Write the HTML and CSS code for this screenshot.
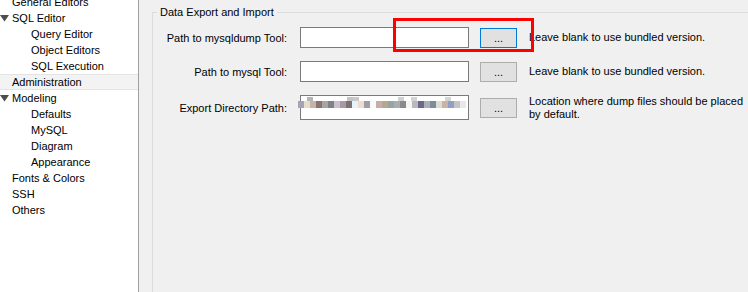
FILE: index.html
```html
<!DOCTYPE html>
<html>
<head>
    <title>Preferences - Administration</title>
    <link rel="stylesheet" href="styles.css">
</head>
<body>
    <div class="window">
        <div class="tree">
            <div class="tree-list">
                <div class="node"><span class="twisty"></span>General Editors</div>
                <div class="node"><span class="twisty"><svg width="9" height="7" viewBox="0 0 9 7"><polygon points="0,0 9,0 4.5,6.5" fill="#4d4d4d"/></svg></span>SQL Editor</div>
                <div class="node child"><span class="twisty"></span>Query Editor</div>
                <div class="node child"><span class="twisty"></span>Object Editors</div>
                <div class="node child"><span class="twisty"></span>SQL Execution</div>
                <div class="node selected"><span class="twisty"></span>Administration</div>
                <div class="node"><span class="twisty"><svg width="9" height="7" viewBox="0 0 9 7"><polygon points="0,0 9,0 4.5,6.5" fill="#4d4d4d"/></svg></span>Modeling</div>
                <div class="node child"><span class="twisty"></span>Defaults</div>
                <div class="node child"><span class="twisty"></span>MySQL</div>
                <div class="node child"><span class="twisty"></span>Diagram</div>
                <div class="node child"><span class="twisty"></span>Appearance</div>
                <div class="node"><span class="twisty"></span>Fonts &amp; Colors</div>
                <div class="node"><span class="twisty"></span>SSH</div>
                <div class="node"><span class="twisty"></span>Others</div>
            </div>
        </div>

        <div class="page">
            <div class="group">
                <div class="group-title">Data Export and Import</div>
                <div class="form">
                    <div class="form-label">Path to mysqldump Tool:</div>
                    <div class="field"></div>
                    <div class="browse focused">...</div>
                    <div class="hint">Leave blank to use bundled version.</div>

                    <div class="form-label">Path to mysql Tool:</div>
                    <div class="field"></div>
                    <div class="browse">...</div>
                    <div class="hint">Leave blank to use bundled version.</div>

                    <div class="form-label">Export Directory Path:</div>
                    <div class="field tall"><div class="mosaic"></div></div>
                    <div class="browse">...</div>
                    <div class="hint">Location where dump files should be placed<br>by default.</div>
                </div>
            </div>
        </div>
    </div>

    <!-- annotation drawn over the screenshot -->
    <div class="callout"></div>
</body>
</html>
```

FILE: styles.css
```css
html, body {
    margin: 0;
    padding: 0;
    overflow: hidden;
}
body {
    width: 748px;
    height: 292px;
    background: #f0f0f0;
    color: #000;
    font-family: 'Liberation Sans', Arial, sans-serif;
    font-size: 11px;
    position: relative;
}
.window {
    display: flex;
    height: 292px;
}
.tree {
    width: 138px;
    flex-shrink: 0;
    background: #fff;
    border-right: 1px solid #a0a0a0;
    overflow: hidden;
}
.tree-list {
    margin-top: -6px;
}
.node {
    display: flex;
    align-items: center;
    height: 16px;
    line-height: 16px;
    white-space: nowrap;
    box-sizing: border-box;
}
.twisty {
    width: 12px;
    flex-shrink: 0;
    display: flex;
    align-items: center;
}
.twisty svg {
    display: block;
    margin-top: 1px;
}
.node.child {
    padding-left: 19px;
}
.node.selected {
    background: #f3f3f3;
    border-top: 1px solid #e4e4e4;
    border-bottom: 1px solid #e4e4e4;
}
.page {
    flex-grow: 1;
    display: flex;
    flex-direction: column;
    padding-left: 13px;
    padding-top: 12px;
    box-sizing: border-box;
    height: 292px;
}
.group {
    flex-grow: 1;
    border-top: 1px solid #dcdcdc;
    border-left: 1px solid #dcdcdc;
}
.group-title {
    width: fit-content;
    margin-top: -7px;
    margin-left: 4px;
    padding: 0 3px;
    line-height: 13px;
    background: #f0f0f0;
}
.form {
    display: grid;
    grid-template-columns: 147px 180px 49px auto;
    grid-template-rows: 21px 21px 25px;
    row-gap: 13px;
    align-items: center;
    margin-top: 8px;
}
.form-label {
    text-align: right;
    padding-right: 13px;
    white-space: nowrap;
}
.field {
    width: 169px;
    height: 21px;
    box-sizing: border-box;
    background: #fff;
    border: 1px solid #7a7a7a;
}
.field.tall {
    height: 25px;
    padding-top: 1px;
}
.mosaic {
    height: 12px;
    margin-left: -3px;
    width: 168px;
    background:
        linear-gradient(to right,
            transparent 0 9px, #b4b4b4 9px 15px, transparent 15px 49px,
            #c4c4c4 49px 55px, #cacaca 55px 61px, transparent 61px 100px,
            #d0d0d0 100px 106px, transparent 106px 113px, #d2d2d2 113px 119px,
            transparent 119px 147px, #d4d4d4 147px 153px, transparent 153px)
            0 0 / 100% 4px no-repeat,
        linear-gradient(to right,
            #a8a2b8 0 6px, #e8dccc 6px 12px, #c4b4aa 12px 18px, #8a7470 18px 24px,
            #a8a4a4 24px 30px, #808088 30px 36px, #c8c2cc 36px 42px, #a898a8 42px 48px,
            #7c7274 48px 54px, #e4f4f8 54px 60px, #eedcd2 60px 66px, #a09ca4 66px 72px,
            #fafafa 72px 78px, #c8aca8 78px 84px, #b4a890 84px 90px, #98a4a4 90px 96px,
            #a8aeb0 96px 102px, #8c8890 102px 108px, #f6f6ee 108px 114px, #b8b8c0 114px 120px,
            #6c6888 120px 126px, #a8b0b8 126px 132px, #7c8c98 132px 138px, #dcdcd4 138px 144px,
            #c8b4a4 144px 150px, #90a0c4 150px 156px, #c4c4c4 156px 162px, #e8e8e8 162px 168px)
            0 4px / 100% 7px no-repeat;
}
.browse {
    width: 37px;
    height: 20px;
    box-sizing: border-box;
    background: #e1e1e1;
    border: 1px solid #adadad;
    text-align: center;
    line-height: 18px;
    color: #000;
}
.browse.focused {
    border-color: #0078d7;
}
.hint {
    white-space: nowrap;
    line-height: 13px;
}
.callout {
    position: absolute;
    left: 393px;
    top: 18px;
    width: 141px;
    height: 34px;
    box-sizing: border-box;
    border: 3px solid #ff0000;
}
```
